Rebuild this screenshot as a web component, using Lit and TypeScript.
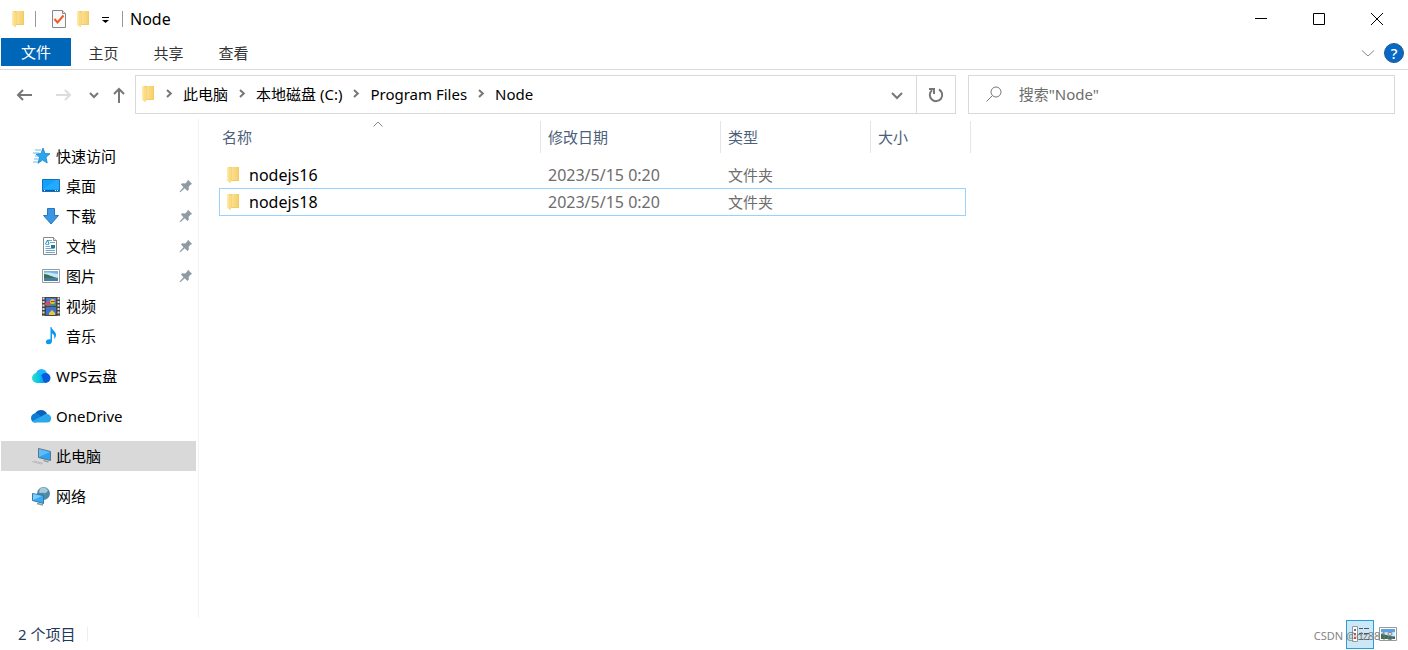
import { LitElement, html, svg, css } from "lit";
import { customElement } from "lit/decorators.js";

const folder = html`<svg class="folder" viewBox="0 0 14 18" width="14" height="18" aria-hidden="true">
  <defs><linearGradient id="f" x1="0" x2="1"><stop offset="0" stop-color="#fbe093"/><stop offset="1" stop-color="#f6d06c"/></linearGradient></defs>
  <path d="M3 1h10v14H3z" fill="#f4cb62"/><path d="M5.500 1H12v13H5.500z" fill="url(#f)"/>
  <path d="M1 1h1.500L5 3.500v14L1 15z" fill="#ffeaa8"/><path d="M2.500 2 5 4v13l-2.500-1.500z" fill="#fbdc84"/>
</svg>`;

const pin = html`<svg class="pin" viewBox="0 0 14 14" width="14" height="14" aria-hidden="true">
  <path d="M9 .8 13.2 5l-1.4.6-2.1 2.2.1 3-1.4 1.1-2.7-2.6L1.6 13 .7 13.2.8 12.2l3.7-4L2 5.6l1.1-1.3 3.2.1 2-2.1z" fill="#8f9ba3"/>
</svg>`;

const chevron = (d: string, cls = "line") => html`<svg class=${cls} viewBox="0 0 14 14" width="14" height="14" aria-hidden="true"><path d=${d} /></svg>`;
const right = chevron("M5 3 8.8 6.500 5 10", "line sep");

const icons: Record<string, unknown> = {
  star: svg`<path d="M12 2l2 5.500 5 .2-4 3.600 1.200 5.700-4.600-3-4.600 3.300 1.600-5.800L5 8l5-.5z" fill="#2aa5ee" stroke="#1484c9" stroke-width=".8"/><path d="M4 4h6M2 7h6M4 10h4M3 13h5M2 16h5" stroke="#65bdf1" stroke-width="1"/>`,
  desktop: svg`<path d="M1.500 3.500h17v12h-17z" fill="#10a0ff" stroke="#1373ba"/><path d="M2 13 15 4h3v9z" fill="#27a9ff"/><path d="M2 14.500h16" stroke="#075c9b"/><path d="M3 14.500h1M14 14.500h1M16 14.500h1" stroke="#fff"/>`,
  download: svg`<path d="M6.500 2.500h7v7h4L10 18 2.500 9.500h4z" fill="#3d96e2" stroke="#2379c0"/>`,
  document: svg`<path d="M2.500 1.500h10l3 3v14h-13z" fill="#fff" stroke="#8a8a8a"/><path d="M12.500 1.500v3h3" fill="#eee" stroke="#8a8a8a"/><path d="M6 4.500h5M9 6.500h5M4.500 8.500H8M4.500 10.500H9M4.500 12.500h9M4.500 14.500H14M4.500 16.500H14" stroke="#6da9c9"/><path d="M10 9h4v3h-4z" fill="#28739e"/><path d="m4.500 8 2-4 1.500 4" fill="none" stroke="#198bd0"/>`,
  picture: svg`<path d="M1.500 3.500h17v13h-17z" fill="#fff" stroke="#999"/><path d="M3 5h14v10H3z" fill="#70b4ec"/><path d="M3 7c4-1 7 0 14 1v4H3z" fill="#c8e6f4"/><path d="M3 8c4 0 8 3 14 4v1H3z" fill="#38705b"/><path d="M3 12h14v3H3z" fill="#477fa1"/>`,
  video: svg`<path d="M1 1h18v19H1z" fill="#444"/><path d="M5 2h10v8H5z" fill="#467cd1"/><path d="M5 11h10v8H5z" fill="#3e72cf"/><path d="M4 7l4-2 2 4H4z" fill="#e14761"/><circle cx="11.500" cy="5.500" r="2.500" fill="#e3c52f"/><path d="M10 5h4v1h-4z" fill="#be3c2c"/><path d="M8 17l3-3 3 3v2H8z" fill="#e8ca34"/><path d="M5 9h5v1H5zM12 8h3v2h-3z" fill="#489147"/><path d="M2.500 1.500v18M17.500 1.500v18" stroke="#ddd" stroke-width="2" stroke-dasharray="2 1.500"/>`,
  music: svg`<path d="M9.500 1h1c.2 3 4.800 4.500 4.500 8-.1 2-1.200 3.500-2 4 .7-2.700.3-4.500-2-5.500V15c0 2-1.500 3.300-3.500 3.300S4.500 17 5 15.500c.5-1.600 2.500-2.500 4.500-2z" fill="#0b98f5"/>`,
  wps: svg`<defs><linearGradient id="w"><stop stop-color="#31dfbe"/><stop offset=".55" stop-color="#08c6e8"/><stop offset="1" stop-color="#0b95f5"/></linearGradient></defs><circle cx="10.500" cy="8.500" r="5.500" fill="#21b4ff"/><circle cx="14.500" cy="12" r="5" fill="#075cda"/><path d="M6 7c4 0 5 3 7 10H6A5 5 0 1 1 6 7z" fill="url(#w)"/>`,
  onedrive: svg`<path d="M4 8a6.500 6.500 0 0 1 12 0l-3 4-8-2z" fill="#0b61b7"/><path d="M0 12c0-3 3-5.500 6.500-4.500l8 6-10 3C2 17 0 14.500 0 12z" fill="#0d7cd3"/><path d="M12 9.500c5-4 9 .5 8 4-.5 2-1.500 3-3.500 3H4.500c-1.500 0-2.500-.5-3-1.500z" fill="#2aa8ee"/>`,
  computer: svg`<path d="m7.500 2.500 12 3v9l-12-3z" fill="#2ba2f3" stroke="#637482"/><path d="m8 3 11 3-11 5z" fill="#5bbdf9"/><path d="m13 14 5 1.500-1 1-5-1.500z" fill="#8a959b"/><path d="m1 15.500 9 2.500 2-.8M3 15l8 2" fill="none" stroke="#b6bbc0"/>`,
  network: svg`<circle cx="12.500" cy="7.500" r="6.500" fill="#4d8aa9"/><path d="M9 3c3-3 7-1 8 2-2 1-2 3-4 2s-4 1-5-1z" fill="#a9cbd7"/><path d="m1.500 7.500 11 2v8l-11-3z" fill="#38a9f4" stroke="#39789f"/><path d="m2 8 9 2-9 4z" fill="#7bccff"/><path d="M6 17.500l6 1.500" stroke="#8b999f" stroke-width="1.500"/>`,
};

const item = (name: string, icon: string, cls = "", pinned = false) => html`
  <a class="node ${cls}" href="#">
    <svg viewBox="0 0 20 20" width="20" height="20" aria-hidden="true">${icons[icon]}</svg>
    <span>${name}</span>${pinned ? pin : ""}
  </a>`;

const files = [
  { name: "nodejs16", date: "2023/5/15 0:20", type: "文件夹", focused: false },
  { name: "nodejs18", date: "2023/5/15 0:20", type: "文件夹", focused: true },
];

@customElement("app-root")
export class AppRoot extends LitElement {
  static styles = css`
    :host { display: flex; flex-direction: column; min-height: 100vh; background: #fff; color: #000;
      font: 15px/20px "Noto Sans", "Noto Sans CJK SC", sans-serif; }
    * { box-sizing: border-box; }
    button, input { font: inherit; color: inherit; background: none; border: 0; padding: 0; margin: 0; }
    button { display: inline-flex; align-items: center; justify-content: center; }
    a { color: inherit; text-decoration: none; }
    svg { display: block; flex: none; }
    .line { fill: none; stroke: #777; stroke-width: 2; }
    .thin { stroke: #888; stroke-width: 1; }
    .dim { stroke: #ddd; }
    .title { display: flex; align-items: center; height: 38px; padding: 0 2px 0 11px; }
    .title .divider { width: 1px; height: 16px; background: #999; }
    .quick { display: flex; align-items: center; gap: 8px; padding: 0 10px 0 14px; }
    .title .folder + .divider { margin-left: 10px; }
    .title h1 { font-size: 16px; font-weight: 400; margin: 0 0 0 7px; flex: 1; }
    .win { width: 58px; height: 38px; }
    .tabs { display: flex; height: 32px; padding: 0 4px 0 1px; border-bottom: 1px solid #dadbdc; }
    .tab { width: 65px; height: 30px; color: #333; }
    .tab.file { width: 70px; height: 28px; background: #0067b8; color: #fff; }
    .grow { flex: 1; }
    .help { width: 20px; height: 20px; margin: 5px 0 0 9px; border-radius: 50%; background: #0868c5; border: 1px solid #205a96; color: #fff; font-weight: 500; }
    .expand { height: 30px; }
    .address { display: flex; align-items: center; padding: 5px 13px 5px 15px; }
    .nav { display: flex; align-items: center; width: 120px; }
    .forward { margin-left: 22px; }
    .recent { margin-left: 14px; }
    .up { margin-left: 11px; }
    .path { flex: 2 1 0; display: flex; height: 39px; border: 1px solid #d9d9d9; }
    .crumbs { display: flex; align-items: center; flex: 1; padding: 0 0 2px 5px; }
    .crumbs .sep { margin: 0 7px; }
    .drop { width: 37px; }
    .refresh { width: 39px; border-left: 1px solid #d9d9d9; }
    .search { flex: 1 1 0; display: flex; align-items: center; height: 39px; margin-left: 12px; border: 1px solid #d9d9d9; padding: 0 0 2px 16px; gap: 16px; }
    .search input { flex: 1; min-width: 0; outline: 0; }
    .search input::placeholder { color: #6d6d6d; opacity: 1; }
    .body { flex: 1; display: flex; }
    .tree { width: 199px; padding: 22px 2px 0 1px; border-right: 1px solid #f3f3f3; }
    .node { display: flex; align-items: center; height: 30px; padding: 0 3px 0 30px; gap: 5px; }
    .node.child { padding-left: 40px; }
    .node.gap { margin-top: 10px; }
    .node.selected { background: #d9d9d9; }
    .pin { margin-left: auto; }
    .list { flex: 1; padding: 2px 0 0 20px; }
    table { border-collapse: separate; border-spacing: 0; table-layout: fixed; width: 752px; }
    .c1 { width: 322px; } .c2 { width: 180px; } .c3 { width: 150px; } .c4 { width: 100px; }
    th { height: 32px; padding: 0 0 0 7px; border-right: 1px solid #e5e5e5; text-align: left; font-weight: 400; color: #4c607a; }
    th:first-child { padding-left: 3px; }
    .sorted { position: relative; }
    .sorted svg { position: absolute; top: -4px; left: 50%; margin-left: -9px; }
    tbody::before { content: ""; display: block; height: 8px; }
    td { height: 27px; padding: 0 0 0 7px; color: #6d6d6d; }
    .name, .date { font-size: 16px; }
    .name { display: flex; align-items: center; gap: 9px; color: #000; }
    tbody tr { position: relative; }
    .focused::after { content: ""; position: absolute; inset: 0 5px -1px 0; border: 1px solid #99d1ff; }
    .status { display: flex; align-items: center; height: 32px; padding: 0 6px 0 18px; color: #1e395b; position: relative; }
    .count { padding-right: 12px; border-right: 1px solid #eee; line-height: 14px; }
    .views { display: flex; margin-left: auto; }
    .view { width: 28px; height: 29px; }
    .view.on { background: #cce8f6; border: 1px solid #26a0da; }
    .mark { position: absolute; right: 15px; top: 8px; font-size: 11px; color: #777; opacity: .9; }
  `;

  render() {
    return html`
      <header class="title">
        ${folder}
        <span class="divider"></span>
        <div class="quick">
          <button aria-label="属性"><svg viewBox="0 0 18 20" width="18" height="20"><path d="M2.500 1.500h10l3 3v14h-13z" fill="#f7f9fb" stroke="#888"/><path d="M12.500 1.500v3h3" fill="#ddd" stroke="#888"/><path d="m4.500 10 3 3.500 6-7" fill="none" stroke="#ef5b22" stroke-width="2"/></svg></button>
          <button aria-label="新建文件夹">${folder}</button>
          <button aria-label="自定义快速访问工具栏"><svg viewBox="0 0 14 14" width="14" height="14"><path d="M4 5h7v1H4zM4 8h7l-3.500 3z"/></svg></button>
        </div>
        <span class="divider"></span>
        <h1>Node</h1>
        <button class="win" aria-label="最小化"><svg width="14" height="14"><path d="M1 6.500h12" stroke="#000"/></svg></button>
        <button class="win" aria-label="最大化"><svg width="14" height="14"><path d="M1.500 1.500h11v11h-11z" fill="none" stroke="#000"/></svg></button>
        <button class="win" aria-label="关闭"><svg width="14" height="14"><path d="m1 1 12 12M13 1 1 13" stroke="#000"/></svg></button>
      </header>
      <nav class="tabs">
        <button class="tab file">文件</button><button class="tab">主页</button><button class="tab">共享</button><button class="tab">查看</button>
        <span class="grow"></span>
        <button class="expand" aria-label="展开功能区">${chevron("M1 4.500 7 10l6-5.500", "line thin")}</button>
        <button class="help" aria-label="帮助">?</button>
      </nav>
      <div class="address">
        <div class="nav">
          <button aria-label="返回"><svg class="line" width="18" height="16"><path d="M17 8H3M8 3 3 8l5 5"/></svg></button>
          <button class="forward" aria-label="前进"><svg class="line dim" width="18" height="16"><path d="M1 8h14M10 3l5 5-5 5"/></svg></button>
          <button class="recent" aria-label="最近浏览的位置">${chevron("M3 5 7 9l4-4")}</button>
          <button class="up" aria-label="上移"><svg class="line" width="14" height="18"><path d="M7 17V3M2 8l5-5 5 5"/></svg></button>
        </div>
        <div class="path">
          <div class="crumbs">${folder}${right}<a href="#">此电脑</a>${right}<a href="#">本地磁盘 (C:)</a>${right}<a href="#">Program Files</a>${right}<a href="#">Node</a></div>
          <button class="drop" aria-label="上一个位置">${chevron("M2 5l5 5 5-5")}</button>
          <button class="refresh" aria-label="刷新"><svg class="line" width="18" height="18"><path d="M12 3.500A6.200 6.200 0 1 1 5 4.200M2 3h5v5"/></svg></button>
        </div>
        <label class="search">
          <svg width="18" height="18" fill="none" stroke="#777"><circle cx="11" cy="7" r="5"/><path d="m7.500 10.500-6 6"/></svg>
          <input type="search" aria-label="搜索" placeholder='搜索"Node"' />
        </label>
      </div>
      <div class="body">
        <nav class="tree">
          ${item("快速访问", "star")}
          ${item("桌面", "desktop", "child", true)}
          ${item("下载", "download", "child", true)}
          ${item("文档", "document", "child", true)}
          ${item("图片", "picture", "child", true)}
          ${item("视频", "video", "child")}
          ${item("音乐", "music", "child")}
          ${item("WPS云盘", "wps", "gap")}
          ${item("OneDrive", "onedrive", "gap")}
          ${item("此电脑", "computer", "gap selected")}
          ${item("网络", "network", "gap")}
        </nav>
        <main class="list">
          <table>
            <colgroup><col class="c1" /><col class="c2" /><col class="c3" /><col class="c4" /></colgroup>
            <thead><tr><th class="sorted">${chevron("M2.500 9.500 7 5l4.500 4.500", "line thin")}名称</th><th>修改日期</th><th>类型</th><th>大小</th></tr></thead>
            <tbody>
              ${files.map((f) => html`<tr class=${f.focused ? "focused" : ""}>
                <td><div class="name">${folder}<span>${f.name}</span></div></td><td class="date">${f.date}</td><td>${f.type}</td><td></td></tr>`)}
            </tbody>
          </table>
        </main>
      </div>
      <footer class="status">
        <span class="count">2 个项目</span>
        <div class="views">
          <button class="view on" aria-label="详细信息"><svg width="20" height="18" viewBox="0 0 20 18"><path d="M2.500 1.500h5v15h-5z" fill="#fff" stroke="#999"/><path d="M4 4h2v2H4z" fill="#3b78b5"/><path d="M4 8h2v2H4zM4 12h2v2H4z" fill="#d0523b"/><path d="M9 3.500h4M14 3.500h5M9 8.500h4M14 8.500h5M9 14.500h4M14 14.500h5" stroke="#555"/></svg></button>
          <button class="view" aria-label="大图标"><svg width="18" height="14"><path d="M.5.5h17v13H.5z" fill="#fff" stroke="#999"/><path d="M2 2h14v10H2z" fill="#5ba2e5"/><path d="M2 5c5 0 9 1 14 0v4H2z" fill="#d5eaf6"/><path d="M2 7c5 0 9 3 14 3v2H2z" fill="#38705b"/></svg></button>
        </div>
        <span class="mark">CSDN @dz8818</span>
      </footer>`;
  }
}
